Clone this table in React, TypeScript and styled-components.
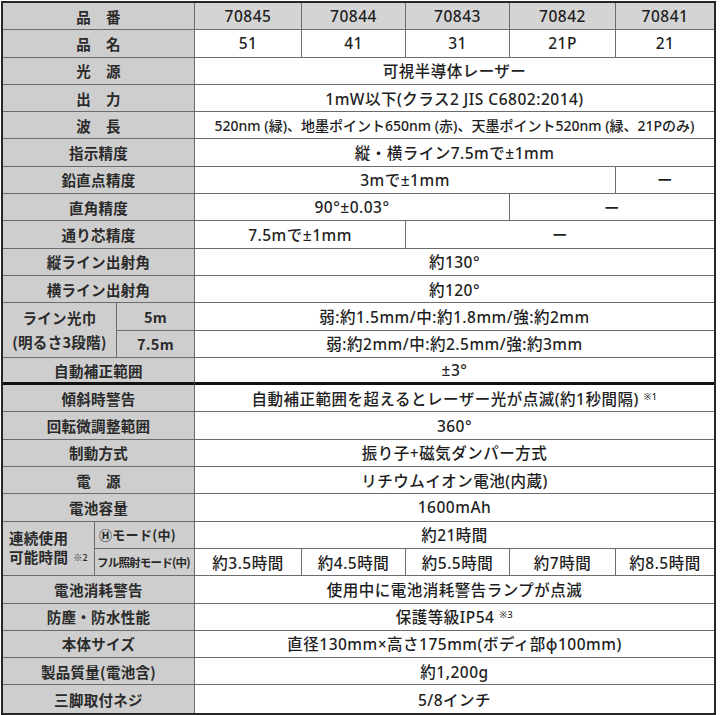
import styled, { createGlobalStyle } from "styled-components"

const Global = createGlobalStyle`
    html, body {
        margin: 0;
        padding: 0;
        background: #ffffff;
    }
    body {
        padding: 1px 0 0 1px;
        font-family: "Noto Sans", "Noto Sans CJK JP", sans-serif;
        color: #1e1e1e;
    }
`

const Sheet = styled.div`
    width: 715px;
    box-sizing: border-box;
    display: grid;
    grid-template-columns: 92px 22px 78px 107px 104px 104px 106px 98px;
    grid-auto-rows: 27.3px;
    border: 2px solid #262626;
`

interface CellProps {
    $span?: number
    $rows?: number
    $cut?: boolean
    $last?: boolean
    $end?: boolean
}

const Cell = styled.div<CellProps>`
    box-sizing: border-box;
    grid-column: span ${p => p.$span ?? 1};
    grid-row: span ${p => p.$rows ?? 1};
    display: flex;
    align-items: center;
    justify-content: center;
    white-space: nowrap;
    overflow: hidden;
    border-right: ${p => (p.$end ? "none" : "1px solid #6c6c6c")};
    border-bottom: ${p =>
        p.$last ? "none" : p.$cut ? "3px solid #111" : "1px solid #6c6c6c"};
`

const Label = styled(Cell)`
    background: #cecece;
    font-family: "Noto Sans CJK JP", "Noto Sans", sans-serif;
    font-size: 14.5px;
    font-weight: 700;
    color: #2a2a2a;
    letter-spacing: 0.3px;
`

const Value = styled(Cell)<{ $head?: boolean }>`
    background: ${p => (p.$head ? "#d4d4d4" : "#ffffff")};
    font-size: 15.5px;
    font-weight: 500;
    letter-spacing: 0.5px;
    color: #1e1e1e;
`

const LongValue = styled(Value)`
    font-size: 14px;
    letter-spacing: 0;
`

const Stack = styled(Label)`
    flex-direction: column;
    align-items: flex-start;
    justify-content: center;
    padding-left: 6px;
    line-height: 19px;
`

const Narrow = styled(Label)`
    font-size: 11.5px;
    letter-spacing: -0.8px;
    justify-content: flex-start;
    padding-left: 2px;
`

const Mode = styled(Label)`
    font-size: 13px;
    justify-content: flex-start;
    padding-left: 4px;
`

const Note = styled.sup`
    font-size: 9px;
    font-weight: 500;
    margin-left: 5px;
    position: relative;
    top: -2px;
    vertical-align: baseline;
`

const App = () => {
    const ids = ["70845", "70844", "70843", "70842", "70841"]
    const names = ["51", "41", "31", "21P", "21"]
    const full = ["約3.5時間", "約4.5時間", "約5.5時間", "約7時間", "約8.5時間"]
    return (
        <>
            <Global />
            <Sheet>
                <Label $span={3}>品　番</Label>
                {ids.map((id, i) => (
                    <Value key={id} $head $end={i === 4}>{id}</Value>
                ))}

                <Label $span={3}>品　名</Label>
                {names.map((n, i) => (
                    <Value key={n} $end={i === 4}>{n}</Value>
                ))}

                <Label $span={3}>光　源</Label>
                <Value $span={5} $end>可視半導体レーザー</Value>

                <Label $span={3}>出　力</Label>
                <Value $span={5} $end>1mW以下(クラス2 JIS C6802:2014)</Value>

                <Label $span={3}>波　長</Label>
                <LongValue $span={5} $end>
                    520nm (緑)、地墨ポイント650nm (赤)、天墨ポイント520nm (緑、21Pのみ)
                </LongValue>

                <Label $span={3}>指示精度</Label>
                <Value $span={5} $end>縦・横ライン7.5mで±1mm</Value>

                <Label $span={3}>鉛直点精度</Label>
                <Value $span={4}>3mで±1mm</Value>
                <Value $end>ー</Value>

                <Label $span={3}>直角精度</Label>
                <Value $span={3}>90°±0.03°</Value>
                <Value $span={2} $end>ー</Value>

                <Label $span={3}>通り芯精度</Label>
                <Value $span={2}>7.5mで±1mm</Value>
                <Value $span={3} $end>ー</Value>

                <Label $span={3}>縦ライン出射角</Label>
                <Value $span={5} $end>約130°</Value>

                <Label $span={3}>横ライン出射角</Label>
                <Value $span={5} $end>約120°</Value>

                <Label $span={2} $rows={2}>
                    <span style={{ textAlign: "center", lineHeight: "24px" }}>
                        ライン光巾<br />(明るさ3段階)
                    </span>
                </Label>
                <Label>5m</Label>
                <Value $span={5} $end>弱:約1.5mm/中:約1.8mm/強:約2mm</Value>
                <Label>7.5m</Label>
                <Value $span={5} $end>弱:約2mm/中:約2.5mm/強:約3mm</Value>

                <Label $span={3} $cut>自動補正範囲</Label>
                <Value $span={5} $cut $end>±3°</Value>

                <Label $span={3}>傾斜時警告</Label>
                <Value $span={5} $end>
                    自動補正範囲を超えるとレーザー光が点滅(約1秒間隔)<Note>※1</Note>
                </Value>

                <Label $span={3}>回転微調整範囲</Label>
                <Value $span={5} $end>360°</Value>

                <Label $span={3}>制動方式</Label>
                <Value $span={5} $end>振り子+磁気ダンパー方式</Value>

                <Label $span={3}>電　源</Label>
                <Value $span={5} $end>リチウムイオン電池(内蔵)</Value>

                <Label $span={3}>電池容量</Label>
                <Value $span={5} $end>1600mAh</Value>

                <Stack $rows={2}>
                    <span>連続使用</span>
                    <span>可能時間<Note>※2</Note></span>
                </Stack>
                <Mode $span={2}>Ⓗモード(中)</Mode>
                <Value $span={5} $end>約21時間</Value>
                <Narrow $span={2}>フル照射モード(中)</Narrow>
                {full.map((t, i) => (
                    <Value key={t} $end={i === 4}>{t}</Value>
                ))}

                <Label $span={3}>電池消耗警告</Label>
                <Value $span={5} $end>使用中に電池消耗警告ランプが点滅</Value>

                <Label $span={3}>防塵・防水性能</Label>
                <Value $span={5} $end>
                    保護等級IP54<Note>※3</Note>
                </Value>

                <Label $span={3}>本体サイズ</Label>
                <Value $span={5} $end>直径130mm×高さ175mm(ボディ部φ100mm)</Value>

                <Label $span={3}>製品質量(電池含)</Label>
                <Value $span={5} $end>約1,200g</Value>

                <Label $span={3} $last>三脚取付ネジ</Label>
                <Value $span={5} $last $end>5/8インチ</Value>
            </Sheet>
        </>
    )
}

export default App
